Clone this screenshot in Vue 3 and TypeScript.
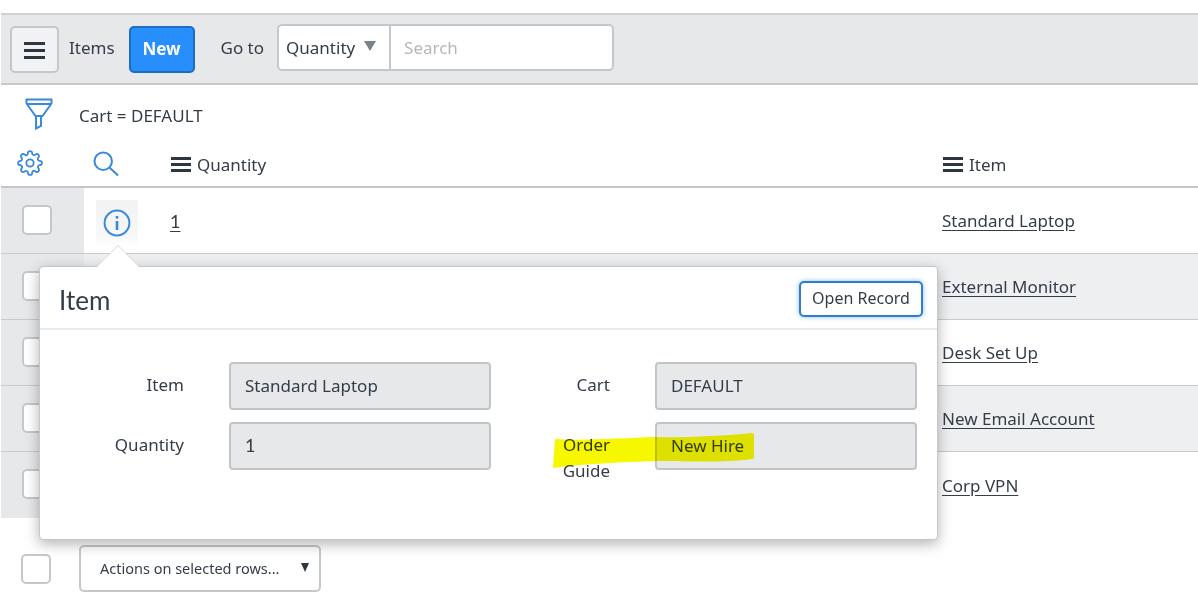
<template>
  <div class="page">
    <div class="toolbar">
      <button class="menu-btn" aria-label="Menu"><span class="burger"></span></button>
      <span class="title">Items</span>
      <button class="new-btn">New</button>
      <span class="goto">Go to</span>
      <div class="search-group">
        <div class="search-field">Quantity<span class="tri"></span></div>
        <div class="search-input">Search</div>
      </div>
    </div>

    <div class="filter-row">
      <svg class="filter-icon" viewBox="0 0 28 32" fill="none" stroke="#3b8ad8" stroke-width="2">
        <path d="M1.5 1.5H26.5V5.5L17.5 18H10.5L1.5 5.5Z" />
        <path d="M2 6H26" />
        <path d="M11 18V30.5L16 28V18" />
      </svg>
      <span>Cart = DEFAULT</span>
    </div>

    <div class="row head">
      <div class="cell-a">
        <svg class="gear" viewBox="0 0 24 24" fill="none" stroke="#3b8ad8" stroke-width="1.7">
          <circle cx="12" cy="12" r="3.4" />
          <path d="M19.4 15a1.65 1.65 0 0 0 .33 1.82l.06.06a2 2 0 0 1 0 2.83 2 2 0 0 1-2.83 0l-.06-.06a1.65 1.65 0 0 0-1.82-.33 1.65 1.65 0 0 0-1 1.51V21a2 2 0 0 1-2 2 2 2 0 0 1-2-2v-.09A1.65 1.65 0 0 0 9 19.4a1.65 1.65 0 0 0-1.82.33l-.06.06a2 2 0 0 1-2.83 0 2 2 0 0 1 0-2.83l.06-.06a1.65 1.65 0 0 0 .33-1.82 1.65 1.65 0 0 0-1.51-1H3a2 2 0 0 1-2-2 2 2 0 0 1 2-2h.09A1.65 1.65 0 0 0 4.6 9a1.65 1.65 0 0 0-.33-1.82l-.06-.06a2 2 0 0 1 0-2.83 2 2 0 0 1 2.83 0l.06.06a1.65 1.65 0 0 0 1.82.33H9a1.65 1.65 0 0 0 1-1.51V3a2 2 0 0 1 2-2 2 2 0 0 1 2 2v.09a1.65 1.65 0 0 0 1 1.51 1.65 1.65 0 0 0 1.82-.33l.06-.06a2 2 0 0 1 2.83 0 2 2 0 0 1 0 2.83l-.06.06a1.65 1.65 0 0 0-.33 1.82V9a1.65 1.65 0 0 0 1.51 1H21a2 2 0 0 1 2 2 2 2 0 0 1-2 2h-.09a1.65 1.65 0 0 0-1.51 1z" />
        </svg>
      </div>
      <div class="cell-b">
        <svg class="lens" viewBox="0 0 28 28" fill="none" stroke="#3b8ad8" stroke-width="2.2">
          <circle cx="11" cy="11" r="9.4" />
          <path d="M18 18L27 26.5" />
        </svg>
      </div>
      <div class="col-head"><span class="burger small"></span>Quantity</div>
      <div class="col-head"><span class="burger small"></span>Item</div>
    </div>

    <div
      v-for="(r, i) in rows"
      :key="r.item"
      class="row"
      :class="{ odd: i % 2 === 1, last: i === rows.length - 1 }"
    >
      <div class="cell-a tint"><span class="check"></span></div>
      <div class="cell-b">
        <div v-if="i === 0" class="info-btn">
          <svg viewBox="0 0 28 28" fill="none" stroke="#3b8ad8" stroke-width="2">
            <circle cx="14" cy="14" r="12.4" />
            <path d="M14 12V21" stroke-width="2.6" />
            <path d="M14 7V9.6" stroke-width="2.6" />
          </svg>
        </div>
      </div>
      <div><a class="link num">{{ r.qty }}</a></div>
      <div><a class="link">{{ r.item }}</a></div>
    </div>

    <div class="footer">
      <span class="check foot-check"></span>
      <div class="actions">Actions on selected rows...<span class="tri dark"></span></div>
    </div>

    <div class="popover">
      <span class="caret"></span>
      <div class="pop-head">
        <span class="pop-title">Item</span>
        <button class="open-btn">Open Record</button>
      </div>
      <div class="pop-form">
        <template v-for="f in fields" :key="f.label">
          <label>{{ f.label }}</label>
          <div class="readonly" :class="{ num: f.value === '1' }">{{ f.value }}</div>
        </template>
      </div>
      <svg class="marker" viewBox="0 0 204 38">
        <path d="M2 6C30 8 70 5 102 4C125 5 170 3 199 0Q201 0 201 2L201 24Q201 26 199 26C170 30 125 28 102 28C70 29 30 31 0 35Z" />
      </svg>
    </div>
  </div>
</template>

<script setup lang="ts">
const rows = [
  { qty: '1', item: 'Standard Laptop' },
  { qty: '', item: 'External Monitor' },
  { qty: '', item: 'Desk Set Up' },
  { qty: '', item: 'New Email Account' },
  { qty: '', item: 'Corp VPN' },
];

const fields = [
  { label: 'Item', value: 'Standard Laptop' },
  { label: 'Cart', value: 'DEFAULT' },
  { label: 'Quantity', value: '1' },
  { label: 'Order Guide', value: 'New Hire' },
];
</script>

<style>
html, body {
  margin: 0;
  background: #fff;
}
</style>

<style scoped>
.page {
  position: relative;
  width: 1198px;
  height: 598px;
  overflow: hidden;
  padding: 13px 0 0 1px;
  box-sizing: border-box;
  font-family: "Noto Sans", Lato, sans-serif;
  font-size: 17px;
  color: #343d47;
}

.num {
  font-family: Lato, sans-serif;
  font-size: 18px;
}

.toolbar {
  height: 72px;
  box-sizing: border-box;
  display: flex;
  align-items: center;
  background: #e6e8ea;
  border-top: 2px solid #cfd2d5;
  border-bottom: 2px solid #c6c9cc;
  padding-left: 9px;
}

.menu-btn {
  width: 49px;
  height: 47px;
  padding: 0;
  display: flex;
  align-items: center;
  justify-content: center;
  background: #f1f2f3;
  border: 2px solid #c5c8cb;
  border-radius: 5px;
}

.menu-btn .burger {
  margin-top: 3px;
}

.burger {
  display: block;
  width: 21px;
  height: 3px;
  background: #2e3640;
  box-shadow: 0 -7px 0 #2e3640, 0 7px 0 #2e3640;
}

.burger.small {
  width: 20px;
  margin: 0 6px 0 1px;
  box-shadow: 0 -6px 0 #2e3640, 0 6px 0 #2e3640;
}

.title {
  margin: -3px 0 0 10px;
}

.new-btn {
  width: 66px;
  height: 47px;
  margin-left: 14px;
  padding: 0 0 2px;
  background: #278efc;
  border: 2px solid #1c6cc4;
  border-radius: 5px;
  color: #fff;
  font: 700 17px "Noto Sans", sans-serif;
}

.goto {
  margin: -3px 0 0 26px;
}

.search-group {
  display: flex;
  width: 337px;
  height: 47px;
  margin-left: 13px;
  margin-top: -3px;
  box-sizing: border-box;
  background: #fff;
  border: 2px solid #c5c8cb;
  border-radius: 5px;
}

.search-field {
  width: 112px;
  box-sizing: border-box;
  padding-left: 7px;
  display: flex;
  align-items: center;
  border-right: 2px solid #c5c8cb;
}

.tri {
  margin: -4px 0 0 9px;
  border-left: 6px solid transparent;
  border-right: 6px solid transparent;
  border-top: 10px solid #7b8288;
}

.tri.dark {
  margin: 0;
  border-left-width: 4px;
  border-right-width: 4px;
  border-top: 9px solid #2e3640;
}

.search-input {
  padding-left: 13px;
  display: flex;
  align-items: center;
  color: #b4b8bc;
}

.filter-row {
  height: 60px;
  display: flex;
  align-items: center;
  padding-left: 24px;
  gap: 26px;
}

.filter-icon {
  width: 28px;
  height: 32px;
  margin-top: -3px;
}

.row {
  display: grid;
  grid-template-columns: 83px 86px 772px 1fr;
  align-items: center;
  height: 66px;
  box-sizing: border-box;
  border-bottom: 1px solid #c8cbce;
}

.row.last {
  border-bottom: none;
}

.row > div {
  height: 100%;
  display: flex;
  align-items: center;
}

.row.odd {
  background: #eeeff0;
}

.row.head {
  height: 43px;
  border-bottom: 2px solid #c2c6ca;
}

.cell-a {
  padding-left: 16px;
  box-sizing: border-box;
}

.cell-a.tint {
  padding-left: 21px;
  background: #e6e8ea;
}

.cell-b {
  padding-left: 12px;
  box-sizing: border-box;
}

.gear {
  width: 26px;
  height: 28px;
  margin-top: -5px;
}

.lens {
  width: 28px;
  height: 26px;
  margin: -4px 0 0 -4px;
}

.col-head {
  margin-top: -3px;
}

.check {
  display: block;
  width: 30px;
  height: 30px;
  box-sizing: border-box;
  background: #fff;
  border: 2px solid #c5c8cb;
  border-radius: 5px;
  margin-top: -2px;
}

.info-btn {
  width: 42px;
  height: 46px;
  margin-top: 4px;
  display: flex;
  align-items: center;
  justify-content: center;
  background: linear-gradient(#f1f2f3, #f8f8f9 80%, #fff);
}

.info-btn svg {
  width: 28px;
  height: 28px;
}

.link {
  text-decoration: underline;
  text-underline-offset: 3px;
}

.footer {
  height: 80px;
  display: flex;
  align-items: flex-start;
  padding: 27px 0 0 20px;
  box-sizing: border-box;
}

.foot-check {
  width: 30px;
  height: 30px;
  margin: 9px 0 0 0;
}

.actions {
  width: 242px;
  height: 47px;
  margin-left: 28px;
  box-sizing: border-box;
  padding: 0 10px 2px 19px;
  display: flex;
  align-items: center;
  justify-content: space-between;
  border: 2px solid #c5c8cb;
  border-radius: 5px;
  font-size: 14.5px;
}

/* floats over the list */
.popover {
  position: absolute;
  left: 39px;
  top: 266px;
  width: 899px;
  height: 274px;
  box-sizing: border-box;
  background: #fff;
  border: 1px solid #c5c8cb;
  border-radius: 4px;
  box-shadow: 0 4px 14px rgba(0, 0, 0, 0.3);
}

.caret {
  position: absolute;
  left: 57px;
  top: -21px;
  width: 0;
  height: 0;
  border-left: 21px solid transparent;
  border-right: 21px solid transparent;
  border-bottom: 21px solid #fff;
  filter: drop-shadow(0 -1px 0 #d4d6d9);
}

.pop-head {
  height: 61px;
  display: flex;
  align-items: center;
  justify-content: space-between;
  padding: 0 14px 0 19px;
  border-bottom: 2px solid #e9eaec;
}

.pop-title {
  font: 26px Lato, sans-serif;
  margin-top: 4px;
}

.open-btn {
  width: 124px;
  height: 36px;
  margin-top: 3px;
  padding: 0 0 2px;
  background: #fff;
  border: 2px solid #2f7fc8;
  border-radius: 5px;
  box-shadow: 0 0 5px rgba(60, 150, 240, 0.6);
  color: #343d47;
  font: 16px "Noto Sans", sans-serif;
}

.pop-form {
  display: grid;
  grid-template-columns: 144px 262px 74px 262px;
  column-gap: 45px;
  row-gap: 12px;
  padding-top: 32px;
}

.pop-form label {
  text-align: right;
  line-height: 26px;
  padding-top: 10px;
}

.readonly {
  height: 48px;
  box-sizing: border-box;
  padding: 0 0 2px 14px;
  display: flex;
  align-items: center;
  background: #e6e8ea;
  border: 2px solid #c2c5c8;
  border-radius: 4px;
}

.marker {
  position: absolute;
  left: 513px;
  top: 166px;
  width: 204px;
  height: 38px;
  fill: #f7f700;
  mix-blend-mode: multiply;
}
</style>
